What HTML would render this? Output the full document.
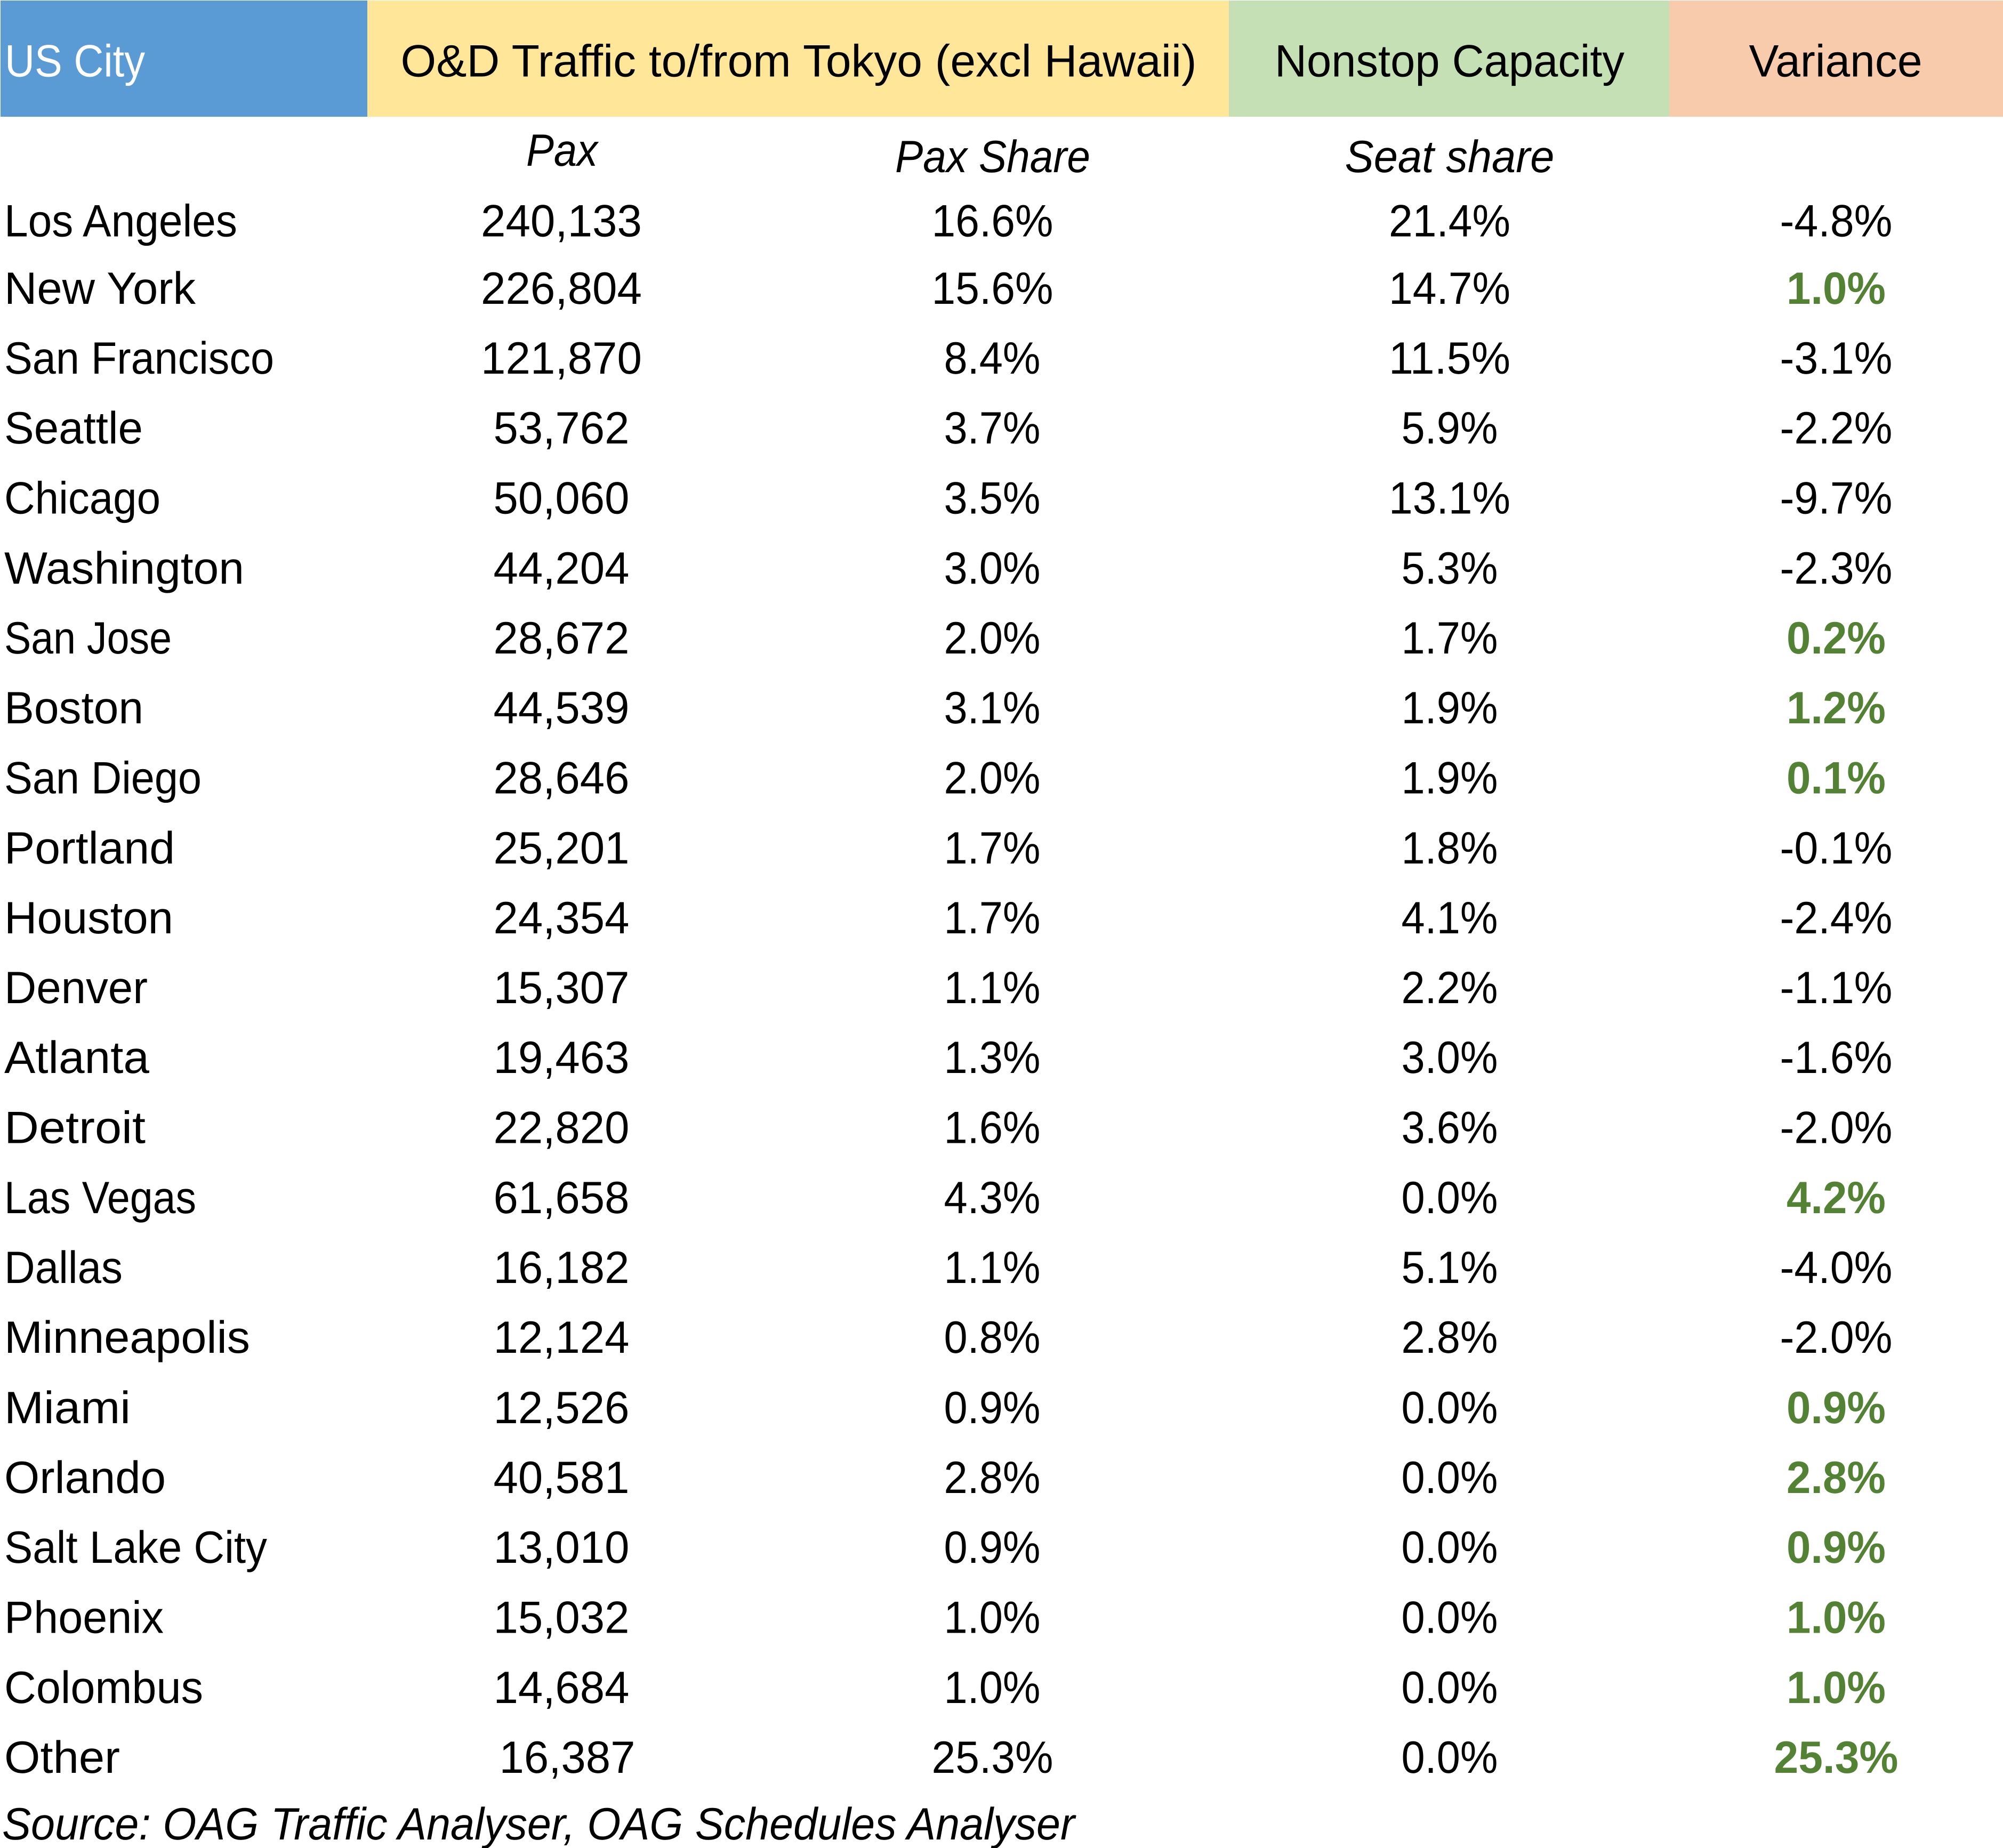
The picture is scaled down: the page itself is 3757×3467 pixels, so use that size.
<!DOCTYPE html>
<html lang="en"><head><meta charset="utf-8"><title>US City O&amp;D Traffic to/from Tokyo</title>
<style>
html,body{margin:0;padding:0;background:#fff;width:3757px;height:3467px;overflow:hidden}
svg{display:block}
text{font-family:"Liberation Sans",Arial,sans-serif;font-size:85px;fill:#000;text-rendering:geometricPrecision}
.c text{text-anchor:start}
.m text{text-anchor:middle}
.i{font-style:italic}
.g{font-weight:700;fill:#548235}
</style></head><body>
<svg xmlns="http://www.w3.org/2000/svg" width="3757" height="3467" viewBox="0 0 3757 3467">
<rect x="1" y="1" width="688" height="218" fill="#5B9BD5"/>
<rect x="689" y="1" width="1616" height="218" fill="#FFE699"/>
<rect x="2305" y="1" width="826" height="218" fill="#C5E0B4"/>
<rect x="3131" y="1" width="626" height="218" fill="#F8CBAD"/>

<text x="9" y="143.5" textLength="263" lengthAdjust="spacingAndGlyphs" style="fill:#fff">US City</text>
<g class="m">
<text x="1498" y="143.5" textLength="1493" lengthAdjust="spacingAndGlyphs">O&amp;D Traffic to/from Tokyo (excl Hawaii)</text>
<text x="2719" y="143.5" textLength="656" lengthAdjust="spacingAndGlyphs">Nonstop Capacity</text>
<text x="3443" y="143.5" textLength="325" lengthAdjust="spacingAndGlyphs">Variance</text>
<text class="i" x="1054" y="311" textLength="134" lengthAdjust="spacingAndGlyphs">Pax</text>
<text class="i" x="1862" y="323" textLength="366" lengthAdjust="spacingAndGlyphs">Pax Share</text>
<text class="i" x="2719" y="323" textLength="393" lengthAdjust="spacingAndGlyphs">Seat share</text>
</g>

<g class="c">
<text x="8" y="443.5" textLength="437" lengthAdjust="spacingAndGlyphs">Los Angeles</text>
<text x="8" y="570" textLength="359" lengthAdjust="spacingAndGlyphs">New York</text>
<text x="8" y="701" textLength="506" lengthAdjust="spacingAndGlyphs">San Francisco</text>
<text x="8" y="832" textLength="260" lengthAdjust="spacingAndGlyphs">Seattle</text>
<text x="8" y="963.5" textLength="293" lengthAdjust="spacingAndGlyphs">Chicago</text>
<text x="8" y="1094.75" textLength="450" lengthAdjust="spacingAndGlyphs">Washington</text>
<text x="8" y="1226" textLength="314" lengthAdjust="spacingAndGlyphs">San Jose</text>
<text x="8" y="1357" textLength="261" lengthAdjust="spacingAndGlyphs">Boston</text>
<text x="8" y="1488.5" textLength="370" lengthAdjust="spacingAndGlyphs">San Diego</text>
<text x="8" y="1620" textLength="320" lengthAdjust="spacingAndGlyphs">Portland</text>
<text x="8" y="1751" textLength="317" lengthAdjust="spacingAndGlyphs">Houston</text>
<text x="8" y="1882" textLength="269" lengthAdjust="spacingAndGlyphs">Denver</text>
<text x="8" y="2013" textLength="272" lengthAdjust="spacingAndGlyphs">Atlanta</text>
<text x="8" y="2144.5" textLength="265" lengthAdjust="spacingAndGlyphs">Detroit</text>
<text x="8" y="2276" textLength="360" lengthAdjust="spacingAndGlyphs">Las Vegas</text>
<text x="8" y="2407" textLength="222" lengthAdjust="spacingAndGlyphs">Dallas</text>
<text x="8" y="2538" textLength="461" lengthAdjust="spacingAndGlyphs">Minneapolis</text>
<text x="8" y="2670" textLength="237" lengthAdjust="spacingAndGlyphs">Miami</text>
<text x="8" y="2801" textLength="303" lengthAdjust="spacingAndGlyphs">Orlando</text>
<text x="8" y="2932" textLength="493" lengthAdjust="spacingAndGlyphs">Salt Lake City</text>
<text x="8" y="3063.5" textLength="299" lengthAdjust="spacingAndGlyphs">Phoenix</text>
<text x="8" y="3195" textLength="373" lengthAdjust="spacingAndGlyphs">Colombus</text>
<text x="8" y="3326" textLength="217" lengthAdjust="spacingAndGlyphs">Other</text>
<text class="i" x="4" y="3451" textLength="2012" lengthAdjust="spacingAndGlyphs">Source: OAG Traffic Analyser, OAG Schedules Analyser</text>
</g>

<g class="m">
<text x="1053" y="443.5" textLength="302" lengthAdjust="spacingAndGlyphs">240,133</text>
<text x="1053" y="570" textLength="302" lengthAdjust="spacingAndGlyphs">226,804</text>
<text x="1053" y="701" textLength="302" lengthAdjust="spacingAndGlyphs">121,870</text>
<text x="1053" y="832" textLength="255" lengthAdjust="spacingAndGlyphs">53,762</text>
<text x="1053" y="963.5" textLength="255" lengthAdjust="spacingAndGlyphs">50,060</text>
<text x="1053" y="1094.75" textLength="255" lengthAdjust="spacingAndGlyphs">44,204</text>
<text x="1053" y="1226" textLength="255" lengthAdjust="spacingAndGlyphs">28,672</text>
<text x="1053" y="1357" textLength="255" lengthAdjust="spacingAndGlyphs">44,539</text>
<text x="1053" y="1488.5" textLength="255" lengthAdjust="spacingAndGlyphs">28,646</text>
<text x="1053" y="1620" textLength="255" lengthAdjust="spacingAndGlyphs">25,201</text>
<text x="1053" y="1751" textLength="255" lengthAdjust="spacingAndGlyphs">24,354</text>
<text x="1053" y="1882" textLength="255" lengthAdjust="spacingAndGlyphs">15,307</text>
<text x="1053" y="2013" textLength="255" lengthAdjust="spacingAndGlyphs">19,463</text>
<text x="1053" y="2144.5" textLength="255" lengthAdjust="spacingAndGlyphs">22,820</text>
<text x="1053" y="2276" textLength="255" lengthAdjust="spacingAndGlyphs">61,658</text>
<text x="1053" y="2407" textLength="255" lengthAdjust="spacingAndGlyphs">16,182</text>
<text x="1053" y="2538" textLength="255" lengthAdjust="spacingAndGlyphs">12,124</text>
<text x="1053" y="2670" textLength="255" lengthAdjust="spacingAndGlyphs">12,526</text>
<text x="1053" y="2801" textLength="255" lengthAdjust="spacingAndGlyphs">40,581</text>
<text x="1053" y="2932" textLength="255" lengthAdjust="spacingAndGlyphs">13,010</text>
<text x="1053" y="3063.5" textLength="255" lengthAdjust="spacingAndGlyphs">15,032</text>
<text x="1053" y="3195" textLength="255" lengthAdjust="spacingAndGlyphs">14,684</text>
<text x="1064" y="3326" textLength="255" lengthAdjust="spacingAndGlyphs">16,387</text>
</g>

<g class="m">
<text x="1861.5" y="443.5" textLength="228" lengthAdjust="spacingAndGlyphs">16.6%</text>
<text x="1861.5" y="570" textLength="228" lengthAdjust="spacingAndGlyphs">15.6%</text>
<text x="1861" y="701" textLength="181" lengthAdjust="spacingAndGlyphs">8.4%</text>
<text x="1861" y="832" textLength="181" lengthAdjust="spacingAndGlyphs">3.7%</text>
<text x="1861" y="963.5" textLength="181" lengthAdjust="spacingAndGlyphs">3.5%</text>
<text x="1861" y="1094.75" textLength="181" lengthAdjust="spacingAndGlyphs">3.0%</text>
<text x="1861" y="1226" textLength="181" lengthAdjust="spacingAndGlyphs">2.0%</text>
<text x="1861" y="1357" textLength="181" lengthAdjust="spacingAndGlyphs">3.1%</text>
<text x="1861" y="1488.5" textLength="181" lengthAdjust="spacingAndGlyphs">2.0%</text>
<text x="1861" y="1620" textLength="181" lengthAdjust="spacingAndGlyphs">1.7%</text>
<text x="1861" y="1751" textLength="181" lengthAdjust="spacingAndGlyphs">1.7%</text>
<text x="1861" y="1882" textLength="181" lengthAdjust="spacingAndGlyphs">1.1%</text>
<text x="1861" y="2013" textLength="181" lengthAdjust="spacingAndGlyphs">1.3%</text>
<text x="1861" y="2144.5" textLength="181" lengthAdjust="spacingAndGlyphs">1.6%</text>
<text x="1861" y="2276" textLength="181" lengthAdjust="spacingAndGlyphs">4.3%</text>
<text x="1861" y="2407" textLength="181" lengthAdjust="spacingAndGlyphs">1.1%</text>
<text x="1861" y="2538" textLength="181" lengthAdjust="spacingAndGlyphs">0.8%</text>
<text x="1861" y="2670" textLength="181" lengthAdjust="spacingAndGlyphs">0.9%</text>
<text x="1861" y="2801" textLength="181" lengthAdjust="spacingAndGlyphs">2.8%</text>
<text x="1861" y="2932" textLength="181" lengthAdjust="spacingAndGlyphs">0.9%</text>
<text x="1861" y="3063.5" textLength="181" lengthAdjust="spacingAndGlyphs">1.0%</text>
<text x="1861" y="3195" textLength="181" lengthAdjust="spacingAndGlyphs">1.0%</text>
<text x="1861.5" y="3326" textLength="228" lengthAdjust="spacingAndGlyphs">25.3%</text>
</g>

<g class="m">
<text x="2719" y="443.5" textLength="228" lengthAdjust="spacingAndGlyphs">21.4%</text>
<text x="2719" y="570" textLength="228" lengthAdjust="spacingAndGlyphs">14.7%</text>
<text x="2719" y="701" textLength="228" lengthAdjust="spacingAndGlyphs">11.5%</text>
<text x="2719" y="832" textLength="181" lengthAdjust="spacingAndGlyphs">5.9%</text>
<text x="2719" y="963.5" textLength="228" lengthAdjust="spacingAndGlyphs">13.1%</text>
<text x="2719" y="1094.75" textLength="181" lengthAdjust="spacingAndGlyphs">5.3%</text>
<text x="2719" y="1226" textLength="181" lengthAdjust="spacingAndGlyphs">1.7%</text>
<text x="2719" y="1357" textLength="181" lengthAdjust="spacingAndGlyphs">1.9%</text>
<text x="2719" y="1488.5" textLength="181" lengthAdjust="spacingAndGlyphs">1.9%</text>
<text x="2719" y="1620" textLength="181" lengthAdjust="spacingAndGlyphs">1.8%</text>
<text x="2719" y="1751" textLength="181" lengthAdjust="spacingAndGlyphs">4.1%</text>
<text x="2719" y="1882" textLength="181" lengthAdjust="spacingAndGlyphs">2.2%</text>
<text x="2719" y="2013" textLength="181" lengthAdjust="spacingAndGlyphs">3.0%</text>
<text x="2719" y="2144.5" textLength="181" lengthAdjust="spacingAndGlyphs">3.6%</text>
<text x="2719" y="2276" textLength="181" lengthAdjust="spacingAndGlyphs">0.0%</text>
<text x="2719" y="2407" textLength="181" lengthAdjust="spacingAndGlyphs">5.1%</text>
<text x="2719" y="2538" textLength="181" lengthAdjust="spacingAndGlyphs">2.8%</text>
<text x="2719" y="2670" textLength="181" lengthAdjust="spacingAndGlyphs">0.0%</text>
<text x="2719" y="2801" textLength="181" lengthAdjust="spacingAndGlyphs">0.0%</text>
<text x="2719" y="2932" textLength="181" lengthAdjust="spacingAndGlyphs">0.0%</text>
<text x="2719" y="3063.5" textLength="181" lengthAdjust="spacingAndGlyphs">0.0%</text>
<text x="2719" y="3195" textLength="181" lengthAdjust="spacingAndGlyphs">0.0%</text>
<text x="2719" y="3326" textLength="181" lengthAdjust="spacingAndGlyphs">0.0%</text>
</g>

<g class="m">
<text x="3444" y="443.5" textLength="211" lengthAdjust="spacingAndGlyphs">-4.8%</text>
<text class="g" x="3444" y="570" textLength="186" lengthAdjust="spacingAndGlyphs">1.0%</text>
<text x="3444" y="701" textLength="211" lengthAdjust="spacingAndGlyphs">-3.1%</text>
<text x="3444" y="832" textLength="211" lengthAdjust="spacingAndGlyphs">-2.2%</text>
<text x="3444" y="963.5" textLength="211" lengthAdjust="spacingAndGlyphs">-9.7%</text>
<text x="3444" y="1094.75" textLength="211" lengthAdjust="spacingAndGlyphs">-2.3%</text>
<text class="g" x="3444" y="1226" textLength="186" lengthAdjust="spacingAndGlyphs">0.2%</text>
<text class="g" x="3444" y="1357" textLength="186" lengthAdjust="spacingAndGlyphs">1.2%</text>
<text class="g" x="3444" y="1488.5" textLength="186" lengthAdjust="spacingAndGlyphs">0.1%</text>
<text x="3444" y="1620" textLength="211" lengthAdjust="spacingAndGlyphs">-0.1%</text>
<text x="3444" y="1751" textLength="211" lengthAdjust="spacingAndGlyphs">-2.4%</text>
<text x="3444" y="1882" textLength="211" lengthAdjust="spacingAndGlyphs">-1.1%</text>
<text x="3444" y="2013" textLength="211" lengthAdjust="spacingAndGlyphs">-1.6%</text>
<text x="3444" y="2144.5" textLength="211" lengthAdjust="spacingAndGlyphs">-2.0%</text>
<text class="g" x="3444" y="2276" textLength="186" lengthAdjust="spacingAndGlyphs">4.2%</text>
<text x="3444" y="2407" textLength="211" lengthAdjust="spacingAndGlyphs">-4.0%</text>
<text x="3444" y="2538" textLength="211" lengthAdjust="spacingAndGlyphs">-2.0%</text>
<text class="g" x="3444" y="2670" textLength="186" lengthAdjust="spacingAndGlyphs">0.9%</text>
<text class="g" x="3444" y="2801" textLength="186" lengthAdjust="spacingAndGlyphs">2.8%</text>
<text class="g" x="3444" y="2932" textLength="186" lengthAdjust="spacingAndGlyphs">0.9%</text>
<text class="g" x="3444" y="3063.5" textLength="186" lengthAdjust="spacingAndGlyphs">1.0%</text>
<text class="g" x="3444" y="3195" textLength="186" lengthAdjust="spacingAndGlyphs">1.0%</text>
<text class="g" x="3444" y="3326" textLength="233" lengthAdjust="spacingAndGlyphs">25.3%</text>
</g>
</svg>
</body></html>
